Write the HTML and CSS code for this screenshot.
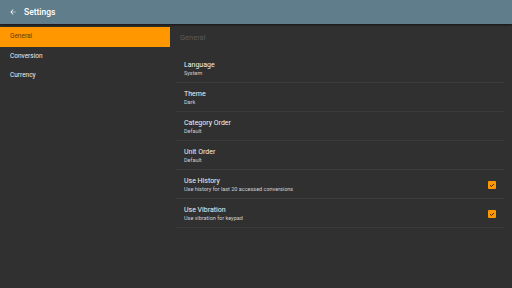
FILE: index.html
```html
<!DOCTYPE html>
<html lang="en">
<head>
  <meta charset="UTF-8" />
  <title>Settings</title>
  <link rel="stylesheet" href="styles.css">
</head>
<body>
  <div class="toolbar">
    <svg class="back" width="8" height="8" viewBox="0 0 24 24"><path d="M20 11H7.83l5.59-5.59L12 4l-8 8 8 8 1.41-1.41L7.83 13H20v-2z" fill="#fff"/></svg>
    <span class="title">Settings</span>
  </div>
  <div class="main">
    <ul class="nav">
      <li class="active">General</li>
      <li>Conversion</li>
      <li>Currency</li>
    </ul>
    <div class="prefs">
      <div class="header">General</div>
      <div class="pref"><div><div class="name">Language</div><div class="sub">System</div></div></div>
      <div class="pref"><div><div class="name">Theme</div><div class="sub">Dark</div></div></div>
      <div class="pref"><div><div class="name">Category Order</div><div class="sub">Default</div></div></div>
      <div class="pref"><div><div class="name">Unit Order</div><div class="sub">Default</div></div></div>
      <div class="pref"><div><div class="name">Use History</div><div class="sub">Use history for last 20 accessed conversions</div></div><span class="check"><svg width="8" height="8" viewBox="0 0 8 8"><path d="M2 4.2l1.4 1.3L6 3" stroke="#3a2a10" stroke-width="1" fill="none"/></svg></span></div>
      <div class="pref"><div><div class="name">Use Vibration</div><div class="sub">Use vibration for keypad</div></div><span class="check"><svg width="8" height="8" viewBox="0 0 8 8"><path d="M2 4.2l1.4 1.3L6 3" stroke="#3a2a10" stroke-width="1" fill="none"/></svg></span></div>
    </div>
  </div>
</body>
</html>
```

FILE: styles.css
```css
body { margin: 0; width: 512px; height: 288px; overflow: hidden; background: #303030; font-family: Roboto, "Liberation Sans", sans-serif; color: #fff; }
.toolbar { height: 24px; background: #607d8b; display: flex; align-items: center; padding-left: 9px; box-shadow: 0 1px 2px rgba(0,0,0,0.6); position: relative; }
.back { margin-right: 7px; }
.title { font-size: 8.5px; font-weight: 500; }
.main { display: flex; padding-top: 3px; }
.nav { list-style: none; margin: 0; padding: 0; width: 170px; }
.nav li { height: 19.5px; line-height: 19.5px; padding-left: 10px; font-size: 6.5px; color: #eee; }
.nav li.active { background: #ff9800; color: #5a3a10; }
.prefs { flex: 1; padding: 0 8px 0 6px; }
.header { height: 27px; line-height: 22px; padding-left: 4px; font-size: 7.5px; color: #5a5a5a; }
.pref { height: 28px; border-bottom: 1px solid #3b3b3b; display: flex; align-items: center; justify-content: space-between; padding: 1px 8px 0 8px; box-sizing: border-box; height: 29px; }
.name { font-size: 7px; color: #f2f2f2; line-height: 9px; }
.sub { font-size: 5.5px; color: #cfcfcf; line-height: 7px; }
.check { width: 8px; height: 8px; background: #ff9800; border-radius: 1px; display: flex; }
```
